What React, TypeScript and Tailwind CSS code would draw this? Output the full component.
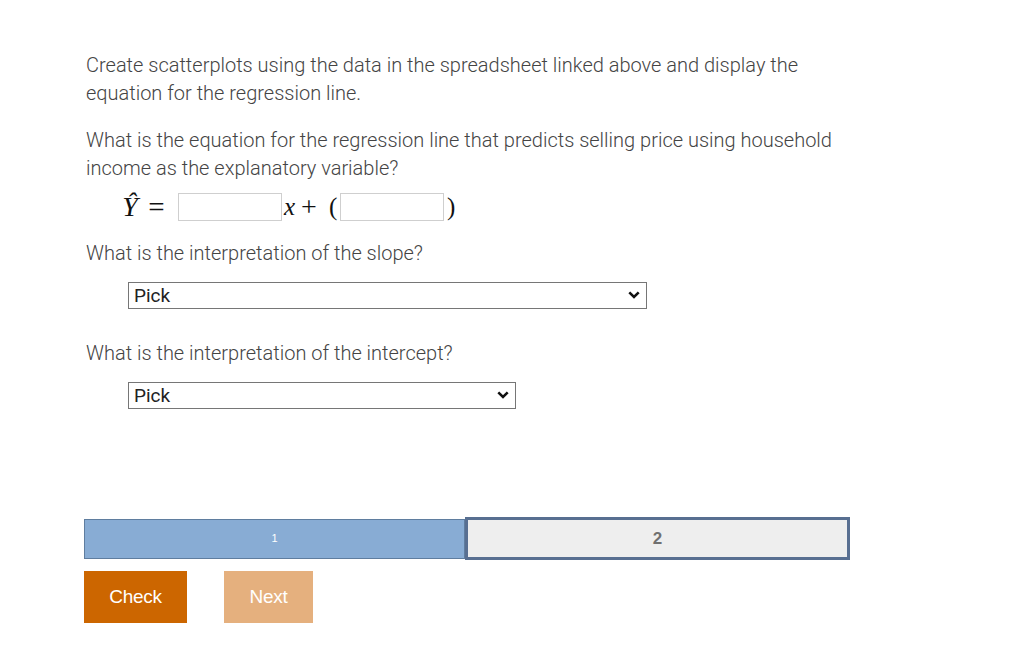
import React from "react";

const roboto = { fontFamily: "Roboto, 'Noto Sans', sans-serif" };
const serif = { fontFamily: "'Liberation Serif', 'DejaVu Serif', serif" };
const sans = { fontFamily: "'Liberation Sans', Arial, sans-serif" };

function Select({ width }: { width: string }) {
  return (
    <div className={`relative h-[27px] ${width}`}>
      <select
        className="w-full h-full appearance-none border border-[#767676] bg-white pl-[5px] text-[19px] font-normal text-[#222] leading-[25px] outline-none"
        style={roboto}
        defaultValue="Pick"
      >
        <option>Pick</option>
      </select>
      <svg
        className="pointer-events-none absolute right-[7px] top-[10px]"
        width="12"
        height="8"
        viewBox="0 0 12 8"
      >
        <path d="M1.3 1.4 L6 6 L10.7 1.4" fill="none" stroke="#111" strokeWidth="2.6" />
      </svg>
    </div>
  );
}

export default function App() {
  return (
    <div className="min-h-[653px] bg-white">
      <div className="pl-[84px] pt-[51px] w-[850px]">
        <div className="px-[2px] text-[20px] leading-[28px] font-light text-[#444]" style={roboto}>
          <p>
            Create scatterplots using the data in the spreadsheet linked above and display the equation for the
            regression line.
          </p>
          <p className="mt-[19px]">
            What is the equation for the regression line that predicts selling price using household income as the
            explanatory variable?
          </p>
          <div className="mt-[11px] flex items-center h-[28px] pl-[36px] text-[25px] text-[#111]" style={serif}>
            <span className="w-[16px] text-center italic text-[28px] leading-[28px]">Ŷ</span>
            <span className="ml-[10px] w-[17px] text-center text-[29px] leading-[28px] font-light">=</span>
            <span className="ml-[13px] block w-[104px] h-[28px] border border-[#cfcfcf] bg-white" />
            <span className="ml-[2px] w-[11px] text-center italic">x</span>
            <span className="ml-[6px] w-[15px] text-center text-[28px] leading-[28px]">+</span>
            <span className="ml-[13px] w-[7px] text-center">(</span>
            <span className="ml-[4px] block w-[104px] h-[28px] border border-[#cfcfcf] bg-white" />
            <span className="ml-[3px] w-[7px] text-center">)</span>
          </div>
          <p className="mt-[18px]">What is the interpretation of the slope?</p>
          <div className="mt-[14px] pl-[42px]">
            <Select width="w-[519px]" />
          </div>
          <p className="mt-[31px]">What is the interpretation of the intercept?</p>
          <div className="mt-[14px] pl-[42px]">
            <Select width="w-[388px]" />
          </div>
        </div>

        <div className="mt-[109px] flex items-center h-[43px] w-[766px]">
          <div
            className="w-[381px] h-[40px] bg-[#88acd4] border border-[#5f7d9f] flex items-center justify-center text-[11px] text-white"
            style={sans}
          >
            1
          </div>
          <div
            className="w-[385px] h-[43px] bg-[#eeeeee] border-[3px] border-[#586f91] flex items-center justify-center text-[17px] font-bold text-[#707070]"
            style={sans}
          >
            2
          </div>
        </div>

        <div className="mt-[11px] flex gap-[37px]">
          <button
            className="w-[103px] h-[52px] bg-[#cc6600] text-white text-[19px] tracking-[-0.3px]"
            style={sans}
          >
            Check
          </button>
          <button
            className="w-[89px] h-[52px] bg-[#e5b07e] text-white text-[19px] tracking-[-0.3px]"
            style={sans}
          >
            Next
          </button>
        </div>
      </div>
    </div>
  );
}
